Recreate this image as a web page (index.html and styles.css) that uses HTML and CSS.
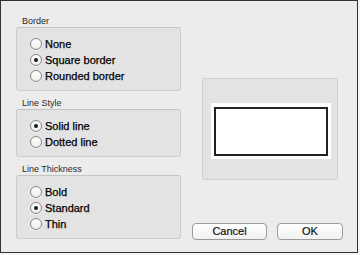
FILE: index.html
```html
<!DOCTYPE html>
<html>
<head>
<meta charset="utf-8">
<link rel="stylesheet" href="styles.css">
</head>
<body>
<div class="window">
  <div class="left">
    <div class="group first">
      <div class="glabel">Border</div>
      <div class="gbox">
        <div class="radio"><span class="dot"></span><span>None</span></div>
        <div class="radio"><span class="dot on"></span><span>Square border</span></div>
        <div class="radio"><span class="dot"></span><span>Rounded border</span></div>
      </div>
    </div>
    <div class="group">
      <div class="glabel">Line Style</div>
      <div class="gbox">
        <div class="radio"><span class="dot on"></span><span>Solid line</span></div>
        <div class="radio"><span class="dot"></span><span>Dotted line</span></div>
      </div>
    </div>
    <div class="group">
      <div class="glabel">Line Thickness</div>
      <div class="gbox">
        <div class="radio"><span class="dot"></span><span>Bold</span></div>
        <div class="radio"><span class="dot on"></span><span>Standard</span></div>
        <div class="radio"><span class="dot"></span><span>Thin</span></div>
      </div>
    </div>
  </div>
  <div class="right">
    <div class="preview">
      <div class="paper"><div class="rect"></div></div>
    </div>
    <div class="buttons">
      <div class="btn cancel">Cancel</div>
      <div class="btn ok">OK</div>
    </div>
  </div>
</div>
</body>
</html>
```

FILE: styles.css
```css
html, body {
  margin: 0;
  padding: 0;
  background: #f4f4f4;
}
.window {
  width: 358px;
  height: 253px;
  box-sizing: border-box;
  border: 1px solid #333;
  background: #ececec;
  display: flex;
  padding: 14px 0 0 15px;
  font-family: "Liberation Sans", Arial, sans-serif;
  color: #000;
}
.left {
  width: 165px;
  display: flex;
  flex-direction: column;
}
.group {
  margin-top: 6px;
}
.group.first {
  margin-top: 0;
}
.glabel {
  height: 12px;
  line-height: 12px;
  font-size: 9px;
  color: #2a2a2a;
  padding-left: 6px;
}
.gbox {
  background: #e3e3e3;
  border: 1px solid #cdcdcd;
  border-top-color: #c4c4c4;
  border-radius: 3px;
  padding: 8px 0 6px 13px;
}
.radio {
  height: 16px;
  display: flex;
  align-items: center;
  font-size: 11px;
  -webkit-text-stroke: 0.25px #000;
}
.dot {
  width: 12px;
  height: 12px;
  box-sizing: border-box;
  border: 1px solid #868686;
  border-radius: 50%;
  background: linear-gradient(#ffffff, #eeeeee);
  margin-right: 3px;
  display: flex;
  align-items: center;
  justify-content: center;
  box-shadow: 0 1px 0 rgba(255,255,255,0.6);
  -webkit-text-stroke: 0;
}
.dot.on::after {
  content: "";
  width: 4px;
  height: 4px;
  border-radius: 50%;
  background: #1a1a1a;
}
.right {
  margin-left: 11px;
  width: 151px;
  display: flex;
  flex-direction: column;
}
.preview {
  margin-top: 63px;
  margin-left: 10px;
  width: 136px;
  height: 102px;
  box-sizing: border-box;
  background: #e3e3e3;
  border: 1px solid #cfcfcf;
  border-radius: 3px;
  padding: 24px 0 0 8px;
}
.paper {
  width: 120px;
  height: 56px;
  box-sizing: border-box;
  background: #fff;
  padding: 4px 3px 3px 3px;
}
.rect {
  width: 114px;
  height: 49px;
  box-sizing: border-box;
  border: 2px solid #222;
  background: #fff;
}
.buttons {
  margin-top: 43px;
  display: flex;
  gap: 10px;
}
.btn {
  height: 17px;
  box-sizing: border-box;
  border: 1px solid #9a9a9a;
  border-radius: 4px;
  background: linear-gradient(#ffffff, #f1f1f1);
  font-size: 11px;
  line-height: 15px;
  text-align: center;
  color: #111;
  -webkit-text-stroke: 0.2px #111;
}
.cancel { width: 75px; }
.ok { width: 66px; }
```
